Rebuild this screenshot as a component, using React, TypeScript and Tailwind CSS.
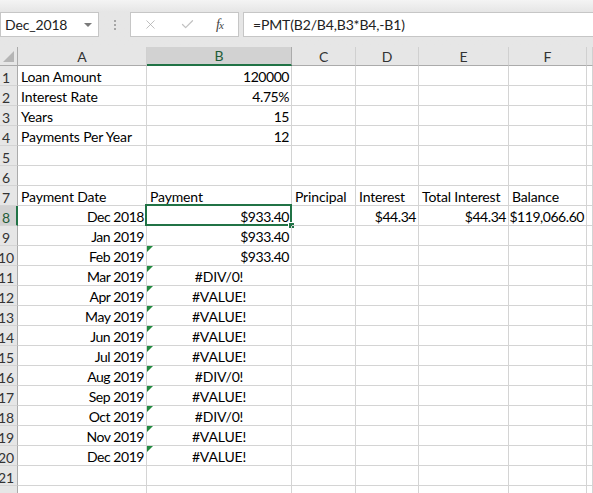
import React from "react";
import { X, Check } from "lucide-react";

type Cell = { v?: string; align?: "l" | "r" | "c"; tri?: boolean };

const COLS = ["A", "B", "C", "D", "E", "F", ""];

const dates = [
  "Dec 2018", "Jan 2019", "Feb 2019", "Mar 2019", "Apr 2019", "May 2019", "Jun 2019",
  "Jul 2019", "Aug 2019", "Sep 2019", "Oct 2019", "Nov 2019", "Dec 2019",
];
const payments = [
  "$933.40", "$933.40", "$933.40", "#DIV/0!", "#VALUE!", "#VALUE!", "#VALUE!",
  "#VALUE!", "#DIV/0!", "#VALUE!", "#DIV/0!", "#VALUE!", "#VALUE!",
];

const buildRows = (): Cell[][] => {
  const rows: Cell[][] = [
    [{ v: "Loan Amount" }, { v: "120000", align: "r" }],
    [{ v: "Interest Rate" }, { v: "4.75%", align: "r" }],
    [{ v: "Years" }, { v: "15", align: "r" }],
    [{ v: "Payments Per Year" }, { v: "12", align: "r" }],
    [],
    [],
    [
      { v: "Payment Date" },
      { v: "Payment" },
      { v: "Principal" },
      { v: "Interest" },
      { v: "Total Interest" },
      { v: "Balance" },
    ],
  ];
  dates.forEach((d, i) => {
    const p = payments[i];
    const row: Cell[] = [
      { v: d, align: "r" },
      { v: p, align: p.startsWith("#") ? "c" : "r", tri: i >= 2 },
    ];
    if (i === 0) {
      row.push({}, { v: "$44.34", align: "r" }, { v: "$44.34", align: "r" }, { v: "$119,066.60", align: "r" });
    }
    rows.push(row);
  });
  rows.push([], []);
  return rows;
};

const FormulaBar = () => (
  <div className="h-[47px] bg-gradient-to-b from-[#f4f4f4] from-0% to-[#e6e6e6] to-25% pt-[12px] flex items-start">
    <div className="w-[99px] h-[25px] bg-white border border-[#c6c6c6] flex items-center pl-[4px] pr-[6px]">
      <span className="flex-1 text-[14px] text-[#222]">Dec_2018</span>
      <span className="w-0 h-0 border-l-[4px] border-r-[4px] border-t-[4px] border-l-transparent border-r-transparent border-t-[#7a7a7a]" />
    </div>
    <div className="w-[31px] h-[25px] flex flex-col items-center justify-center gap-[2px]">
      <span className="w-[2px] h-[2px] bg-[#a6a6a6]" />
      <span className="w-[2px] h-[2px] bg-[#a6a6a6]" />
      <span className="w-[2px] h-[2px] bg-[#a6a6a6]" />
    </div>
    <div className="w-[109px] h-[25px] bg-white border border-[#c6c6c6] flex items-center">
      <X size={15} strokeWidth={1.2} color="#a9a9a9" className="ml-[12px]" />
      <Check size={15} strokeWidth={2} color="#c2c2c2" className="ml-[22px]" />
      <span className="ml-[21px] text-[14px] italic text-[#444] font-['Liberation_Serif',serif] tracking-[-1px]">
        f<span className="text-[11px]">x</span>
      </span>
    </div>
    <div className="flex-1 ml-[4px] h-[25px] bg-white border border-[#c6c6c6] border-r-0 flex items-center pl-[9px] text-[14px] text-[#222]">
      =PMT(B2/B4,B3*B4,-B1)
    </div>
  </div>
);

export default function App() {
  const rows = buildRows();
  return (
    <div className="w-[593px] h-[493px] overflow-hidden bg-white font-['Lato','Liberation_Sans',sans-serif] text-black tracking-[-0.15px]">
      <FormulaBar />
      <div className="grid grid-cols-[18px_129px_145px_64px_63px_90px_78px_1fr]">
        <div className="h-[19px] bg-[#e6e6e6] border-r border-b border-[#ababab] relative overflow-hidden">
          <svg width="17" height="18" className="absolute left-0 top-0">
            <polygon points="3,15 14,15 14,4" fill="#b5b5b5" />
          </svg>
        </div>
        {COLS.map((c, i) => (
          <div
            key={i}
            className={`h-[19px] flex items-center justify-center text-[14px] border-r ${
              c === "B"
                ? "bg-[#d2d2d2] border-b-2 border-b-[#217346] border-r-[#ababab] text-[#1e5c37]"
                : "bg-[#e6e6e6] border-b border-b-[#ababab] border-r-[#d0d0d0] text-[#333]"
            }`}
          >
            {c}
          </div>
        ))}
        {rows.map((row, r) => (
          <React.Fragment key={r}>
            <div
              className={`h-[20px] relative overflow-hidden text-[14px] border-b ${
                r === 7
                  ? "bg-[#d2d2d2] border-r-2 border-r-[#217346] border-b-[#d4d4d4] text-[#1e5c37]"
                  : "bg-[#e6e6e6] border-r border-r-[#ababab] border-b-[#d4d4d4] text-[#333]"
              }`}
            >
              <span className="absolute left-0 top-[1px] w-[12px] whitespace-nowrap flex justify-center">
                {r + 1}
              </span>
            </div>
            {COLS.map((_, c) => {
              const cell = row[c] || {};
              const sel = r === 7 && c === 1;
              return (
                <div
                  key={c}
                  className={`h-[20px] relative border-r border-b border-[#d4d4d4] flex items-center pt-[1px] text-[14px] whitespace-nowrap ${
                    cell.align === "r"
                      ? "justify-end pr-[2px] tracking-[-0.45px]"
                      : cell.align === "c"
                      ? "justify-center"
                      : "justify-start pl-[3px]"
                  }`}
                >
                  {cell.v}
                  {cell.tri && (
                    <span className="absolute left-0 top-0 w-0 h-0 border-t-[6px] border-r-[6px] border-t-[#218a3f] border-r-transparent" />
                  )}
                  {sel && (
                    <>
                      <span className="absolute -left-[2px] -top-[2px] -right-[1px] -bottom-[1px] border-2 border-[#217346]" />
                      <span className="absolute -right-[4px] -bottom-[4px] w-[7px] h-[7px] bg-[#217346] border border-white" />
                    </>
                  )}
                </div>
              );
            })}
          </React.Fragment>
        ))}
      </div>
    </div>
  );
}
